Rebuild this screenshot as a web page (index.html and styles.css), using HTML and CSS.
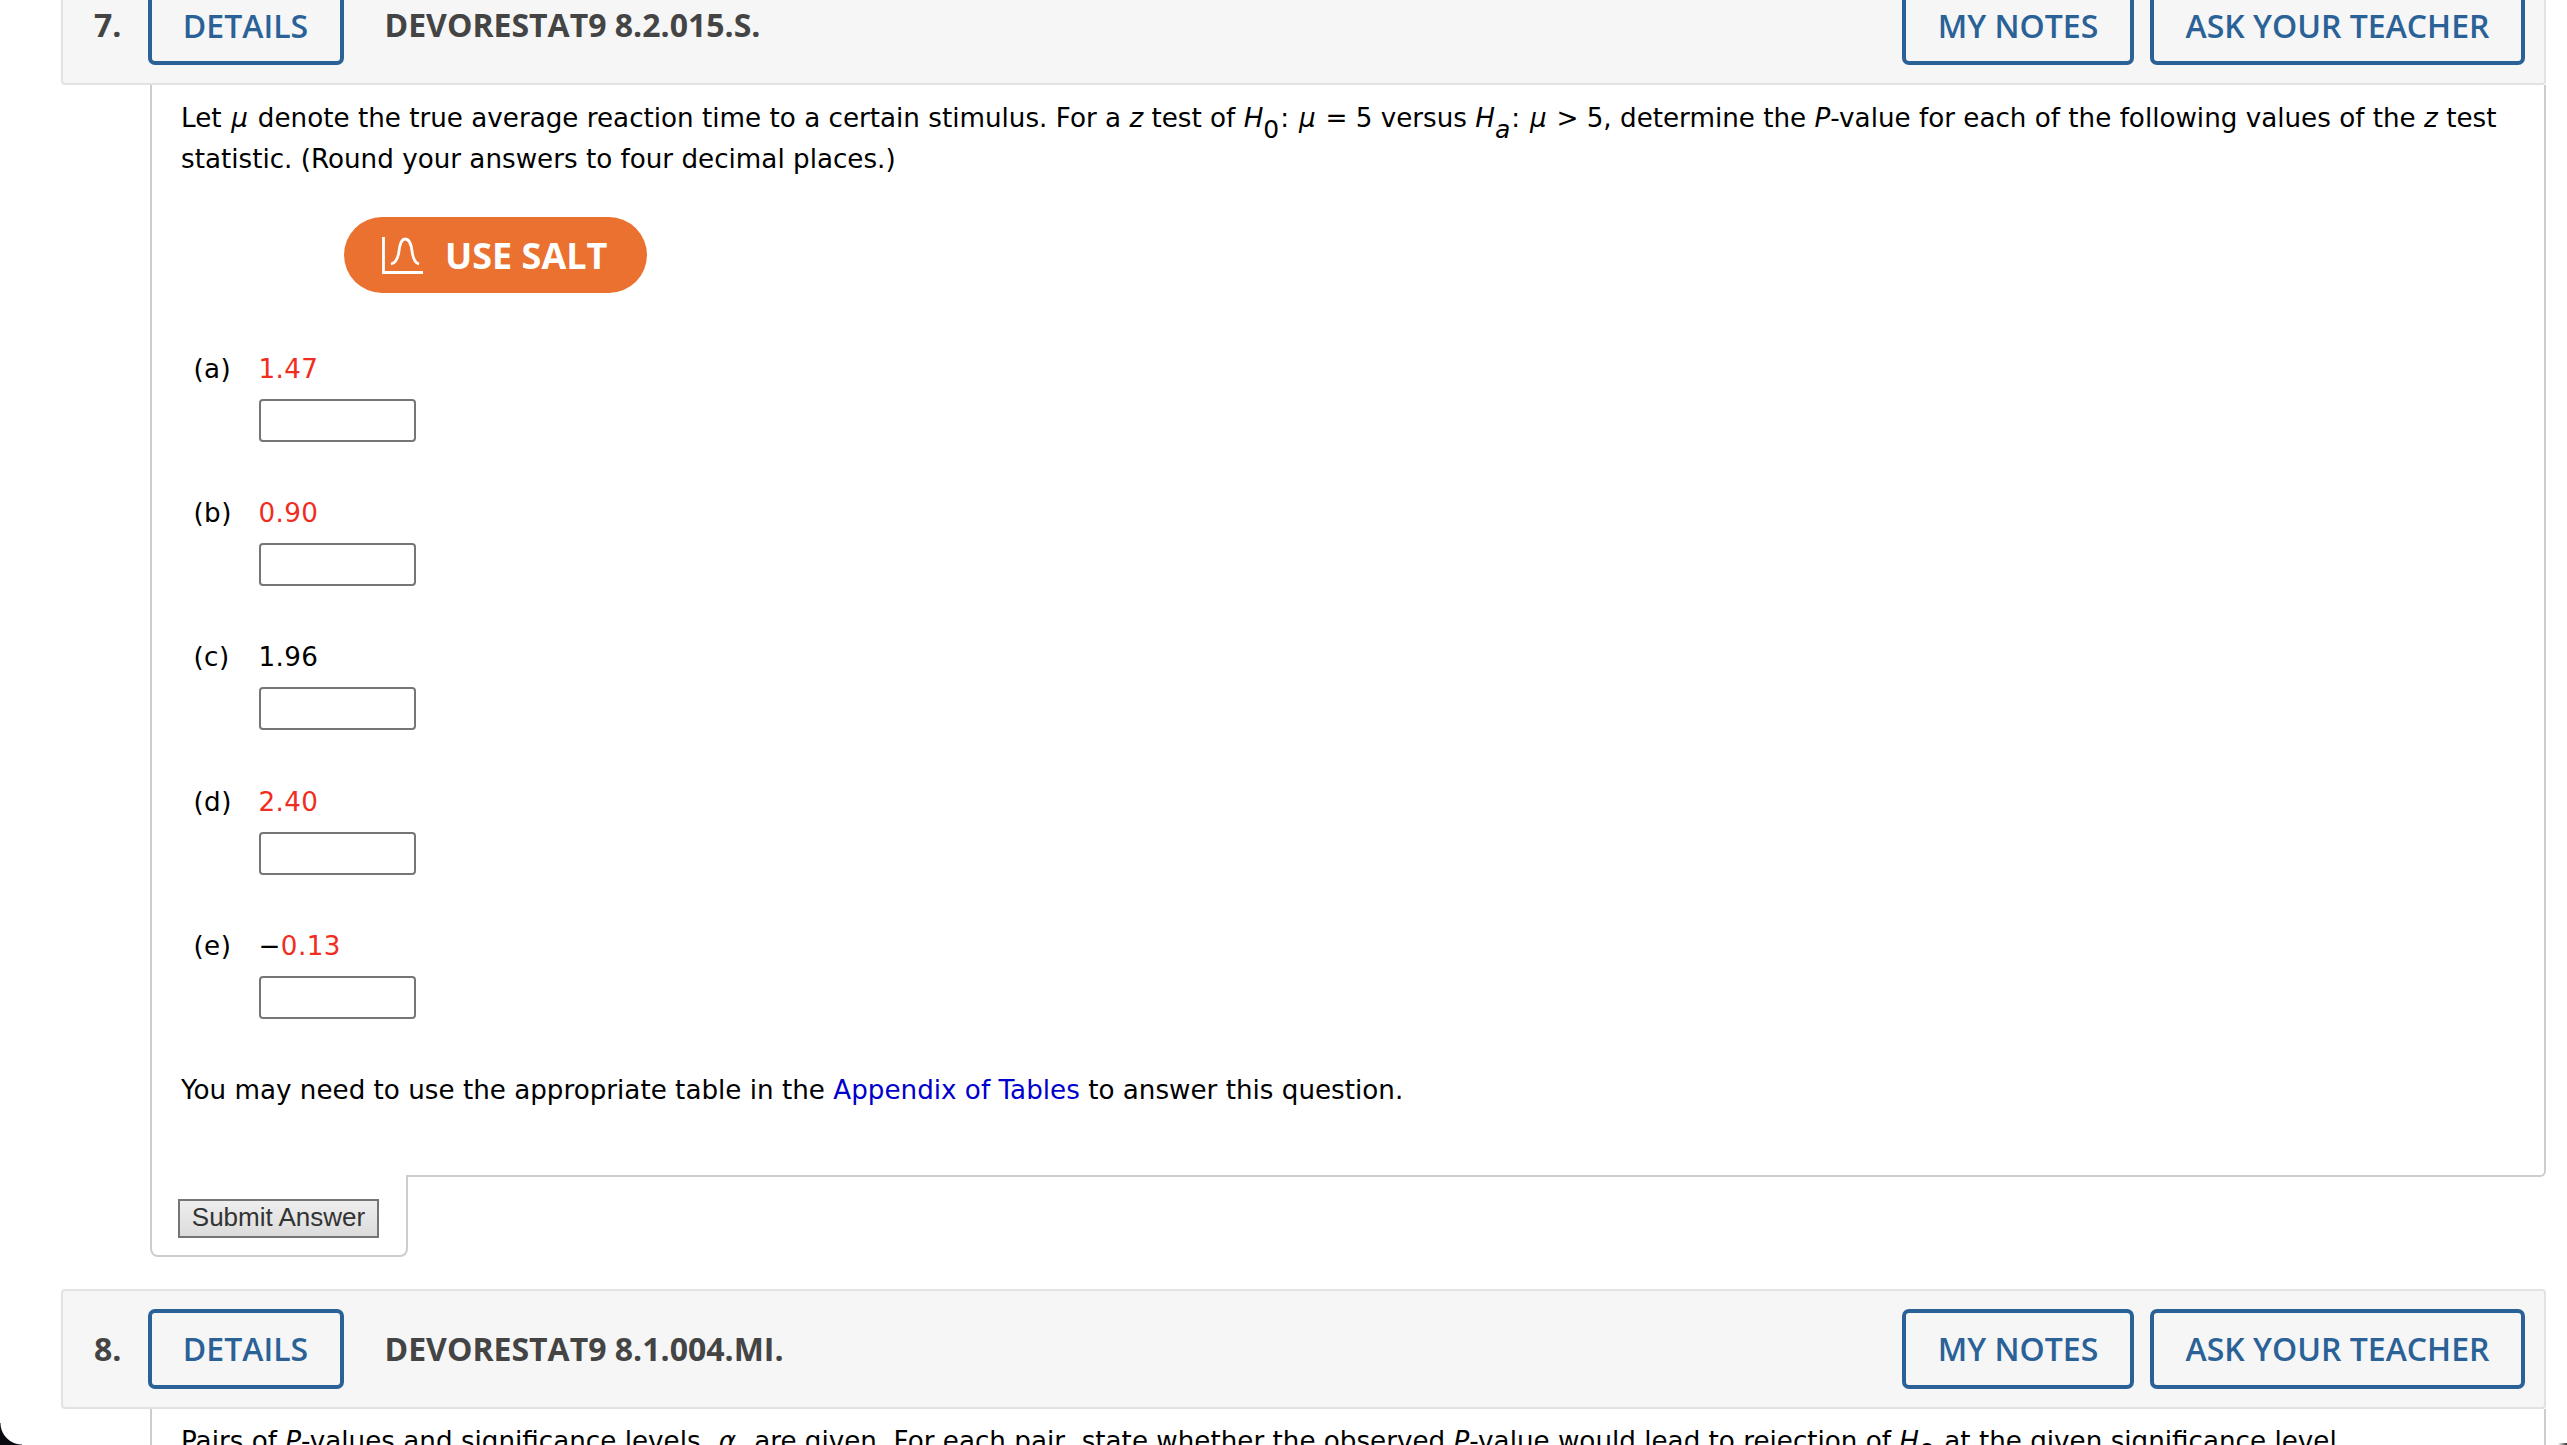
FILE: index.html
```html
<!DOCTYPE html>
<html lang="en">
<head>
<meta charset="utf-8">
<title>Homework questions</title>
<link rel="stylesheet" href="styles.css">
</head>
<body>
<main class="page">
  <section class="question">
    <header class="q-head">
      <span class="q-num">7.</span>
      <button class="q-btn q-btn-details">DETAILS</button>
      <span class="q-title">DEVORESTAT9 8.2.015.S.</span>
      <div class="q-actions">
        <button class="q-btn q-btn-notes">MY NOTES</button>
        <button class="q-btn q-btn-ask">ASK YOUR TEACHER</button>
      </div>
    </header>
    <div class="q-body">
      <p class="q-text">Let <i class="mu">μ</i> denote the true average reaction time to a certain stimulus. For a <i>z</i> test of <i>H</i><sub>0</sub>: <i class="mu">μ</i> = 5 versus <i>H</i><sub><i>a</i></sub>: <i class="mu">μ</i> &gt; 5, determine the <i>P</i>-value for each of the following values of the <i>z</i> test statistic. (Round your answers to four decimal places.)</p>
      <button class="salt">
        <svg class="salt-icon" viewBox="0 0 41 37" width="41" height="37" aria-hidden="true"><path d="M1.5 0V35.5H41" fill="none" stroke="#fff" stroke-width="2.8"/><path d="M9 27C14 26 16 22 17 14C18 6 20 2 23 2C27 2 29 6 30 14C31 22 33 26 37 27" fill="none" stroke="#fff" stroke-width="2.8"/></svg>
        <span>USE SALT</span>
      </button>
      <div class="part"><span class="part-label">(a)</span><div><div class="part-value red">1.47</div><input class="answer" type="text"></div></div>
      <div class="part"><span class="part-label">(b)</span><div><div class="part-value red">0.90</div><input class="answer" type="text"></div></div>
      <div class="part"><span class="part-label">(c)</span><div><div class="part-value">1.96</div><input class="answer" type="text"></div></div>
      <div class="part"><span class="part-label">(d)</span><div><div class="part-value red">2.40</div><input class="answer" type="text"></div></div>
      <div class="part"><span class="part-label">(e)</span><div><div class="part-value">−<span class="red">0.13</span></div><input class="answer" type="text"></div></div>
      <p class="q-note">You may need to use the appropriate table in the <a href="#">Appendix of Tables</a> to answer this question.</p>
    </div>
    <div class="submit-tab"><button class="submit">Submit Answer</button></div>
  </section>
  <section class="question">
    <header class="q-head">
      <span class="q-num">8.</span>
      <button class="q-btn q-btn-details">DETAILS</button>
      <span class="q-title">DEVORESTAT9 8.1.004.MI.</span>
      <div class="q-actions">
        <button class="q-btn q-btn-notes">MY NOTES</button>
        <button class="q-btn q-btn-ask">ASK YOUR TEACHER</button>
      </div>
    </header>
    <div class="q-body">
      <p class="q-text">Pairs of <i>P</i>-values and significance levels, <i class="mu">α</i>, are given. For each pair, state whether the observed <i>P</i>-value would lead to rejection of <i>H</i><sub>0</sub> at the given significance level.</p>
    </div>
  </section>
</main>
<div class="corner-left"></div>
<div class="corner-right"></div>
</body>
</html>
```
FILE: styles.css
```css
html, body {
  margin: 0;
  height: 1445px;
  overflow: hidden;
  background: #fff;
}

body {
  position: relative;
  font-family: "DejaVu Sans", Verdana, sans-serif;
  font-size: 26.2px;
  line-height: 41.5px;
  color: #000;
}

.page {
  width: 2485px;
  margin: -35px 0 0 61px;
}

.question {
  margin-bottom: 32px;
}

.q-head {
  display: flex;
  align-items: center;
  box-sizing: border-box;
  height: 120px;
  padding: 0 19px 0 31px;
  background: #f6f6f6;
  border: 2px solid #e2e2e2;
  border-radius: 4px;
  font-family: "Open Sans", sans-serif;
}

.q-num {
  width: 53.5px;
  font-size: 32px;
  font-weight: 700;
  color: #444;
}

.q-title {
  margin-left: 41px;
  font-size: 32px;
  font-weight: 700;
  color: #444;
}

.q-actions {
  display: flex;
  gap: 16px;
  margin-left: auto;
}

.q-btn {
  box-sizing: border-box;
  height: 80px;
  padding: 0;
  background: transparent;
  border: 4px solid #2a6297;
  border-radius: 7px;
  font-family: "Open Sans", sans-serif;
  font-size: 32px;
  font-weight: 600;
  color: #2a6297;
}

.q-btn-details { width: 196px; }
.q-btn-notes { width: 232px; }
.q-btn-ask { width: 375px; }

.q-body {
  margin-left: 89px;
  padding: 12.5px 28px 63px 29px;
  border: solid #cdcdcd;
  border-width: 0 2px 2px;
  border-bottom-right-radius: 6px;
}

.q-text,
.q-note {
  margin: 0;
}

.q-text sub {
  padding-right: 1px;
  font-size: 25px;
  line-height: 0;
  vertical-align: -11px;
}

.mu {
  padding: 0 1.5px;
}

.q-note {
  margin-top: 0;
}

.q-note a {
  color: #0000cc;
  text-decoration: none;
}

.salt {
  display: flex;
  align-items: center;
  box-sizing: border-box;
  width: 303px;
  height: 76px;
  margin: 36.5px 0 55.5px 163px;
  padding: 0 0 0 38px;
  background: #ea7130;
  border: 0;
  border-radius: 38px;
  font-family: "Open Sans", sans-serif;
  font-size: 36px;
  font-weight: 700;
  color: #fff;
}

.salt-icon {
  margin-right: 22px;
}

.part {
  display: grid;
  grid-template-columns: 65px 1fr;
  height: 144.4px;
  padding-left: 12.5px;
  letter-spacing: 0.4px;
}

.part-value {
  margin-bottom: 8.5px;
}

.red {
  color: #f02d20;
}

.answer {
  display: block;
  box-sizing: border-box;
  width: 157px;
  height: 43px;
  padding: 0;
  background: #fff;
  border: 2px solid #767676;
  border-radius: 4px;
}

.submit-tab {
  box-sizing: border-box;
  position: relative;
  width: 258px;
  height: 82px;
  margin: -2px 0 0 89px;
  padding: 24.5px 0 0 26px;
  background: #fff;
  border: solid #cdcdcd;
  border-width: 0 2px 2px;
  border-radius: 0 0 8px 8px;
}

.submit {
  display: block;
  box-sizing: border-box;
  width: 201px;
  height: 39px;
  padding: 0 0 2px;
  background: linear-gradient(#eeeeee, #dcdcdc);
  border: 2px solid #757575;
  font-family: "Liberation Sans", Arial, sans-serif;
  font-size: 26px;
  color: #333;
}

.corner-left {
  position: absolute;
  left: 0;
  bottom: 0;
  width: 22px;
  height: 22px;
  background: radial-gradient(circle at 100% 0, transparent 21px, #0a0a12 22px);
}

.corner-right {
  position: absolute;
  right: 0;
  bottom: 0;
  width: 9px;
  height: 2px;
  background: linear-gradient(to right, transparent, #333);
}
```
